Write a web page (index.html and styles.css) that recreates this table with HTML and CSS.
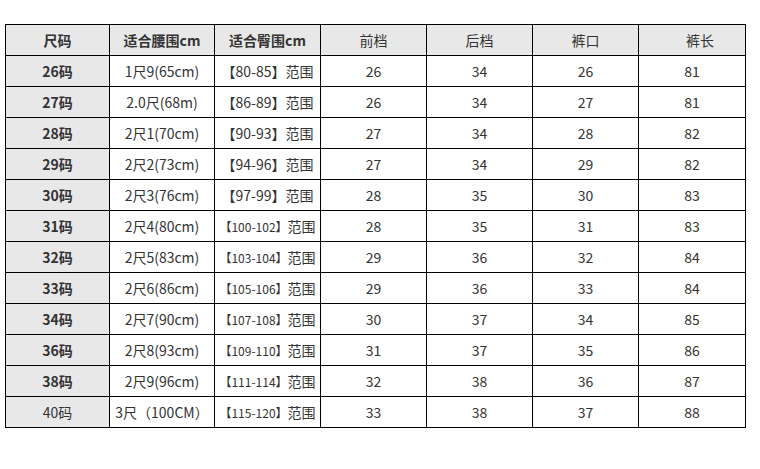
FILE: index.html
```html
<!DOCTYPE html>
<html>
<head>
<meta charset="utf-8">
<link rel="stylesheet" href="styles.css">
</head>
<body>
<div class="wrap">
<table class="size-table">
<colgroup>
<col class="c1"><col class="c2"><col class="c3"><col class="c4"><col class="c5"><col class="c6"><col class="c7">
</colgroup>
<thead>
<tr class="head">
<th class="b">尺码</th><th class="b">适合腰围cm</th><th class="b">适合臀围cm</th><th>前档</th><th>后档</th><th>裤口</th><th class="shift">裤长</th>
</tr>
</thead>
<tbody>
<tr><td class="size b">26码</td><td>1尺9(65cm)</td><td>【80-85】范围</td><td>26</td><td>34</td><td>26</td><td>81</td></tr>
<tr><td class="size b">27码</td><td>2.0尺(68m)</td><td>【86-89】范围</td><td>26</td><td>34</td><td>27</td><td>81</td></tr>
<tr><td class="size b">28码</td><td>2尺1(70cm)</td><td>【90-93】范围</td><td>27</td><td>34</td><td>28</td><td>82</td></tr>
<tr><td class="size b">29码</td><td>2尺2(73cm)</td><td>【94-96】范围</td><td>27</td><td>34</td><td>29</td><td>82</td></tr>
<tr><td class="size b">30码</td><td>2尺3(76cm)</td><td>【97-99】范围</td><td>28</td><td>35</td><td>30</td><td>83</td></tr>
<tr><td class="size b">31码</td><td>2尺4(80cm)</td><td><span class="sm">【100-102】</span>范围</td><td>28</td><td>35</td><td>31</td><td>83</td></tr>
<tr><td class="size b">32码</td><td>2尺5(83cm)</td><td><span class="sm">【103-104】</span>范围</td><td>29</td><td>36</td><td>32</td><td>84</td></tr>
<tr><td class="size b">33码</td><td>2尺6(86cm)</td><td><span class="sm">【105-106】</span>范围</td><td>29</td><td>36</td><td>33</td><td>84</td></tr>
<tr><td class="size b">34码</td><td>2尺7(90cm)</td><td><span class="sm">【107-108】</span>范围</td><td>30</td><td>37</td><td>34</td><td>85</td></tr>
<tr><td class="size b">36码</td><td>2尺8(93cm)</td><td><span class="sm">【109-110】</span>范围</td><td>31</td><td>37</td><td>35</td><td>86</td></tr>
<tr><td class="size b">38码</td><td>2尺9(96cm)</td><td><span class="sm">【111-114】</span>范围</td><td>32</td><td>38</td><td>36</td><td>87</td></tr>
<tr><td class="size">40码</td><td>3尺（100CM）</td><td><span class="sm">【115-120】</span>范围</td><td>33</td><td>38</td><td>37</td><td>88</td></tr>
</tbody>
</table>
</div>
</body>
</html>
```
FILE: styles.css
```css
html, body {
  margin: 0;
  padding: 0;
  background: #fff;
}
.wrap {
  padding: 24px 0 0 5px;
}
.size-table {
  border-collapse: collapse;
  table-layout: fixed;
  width: 740px;
  font-family: "Noto Sans CJK SC", "Liberation Sans", sans-serif;
  font-size: 14px;
  color: #333;
}
.c1 { width: 104px; }
.c2 { width: 105px; }
.c3 { width: 106px; }
.c4, .c5, .c6 { width: 106px; }
.c7 { width: 107px; }
.size-table th,
.size-table td {
  border: 1px solid #000;
  height: 30px;
  padding: 0;
  text-align: center;
  vertical-align: middle;
  font-weight: normal;
  line-height: 18px;
}
.head th {
  background: #e8e8e8;
}
.size-table th.shift {
  padding-left: 16px;
}
.size-table td.size {
  background: #e8e8e8;
}
.size-table .b {
  font-weight: bold;
}
.sm {
  font-size: 12px;
}
```
